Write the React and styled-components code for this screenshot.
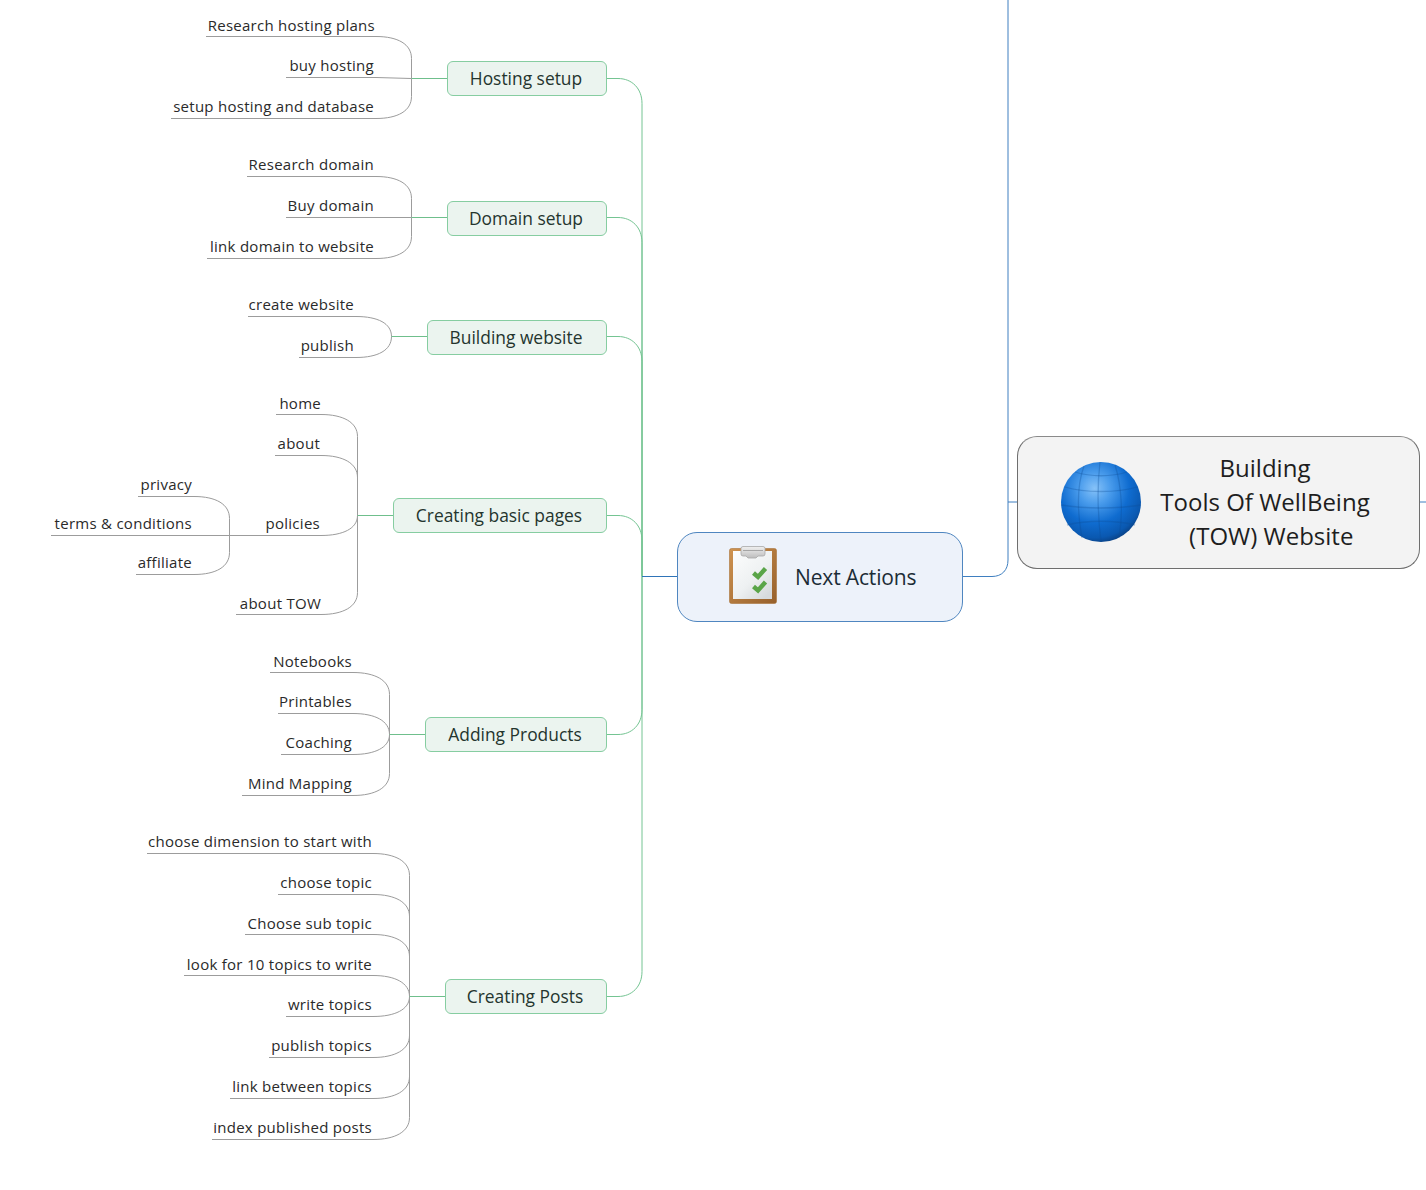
import React from "react";
import styled, { createGlobalStyle } from "styled-components";

const Global = createGlobalStyle`
  html, body { margin: 0; padding: 0; background: #fff; overflow: hidden; }
  body { font-family: "Open Sans", "Noto Sans", "Liberation Sans", sans-serif; }
`;

const Canvas = styled.div`
  position: relative;
  width: 1426px;
  height: 1190px;
  overflow: hidden;
  background: #fff;
`;
const Wires = styled.svg`
  position: absolute;
  inset: 0;
  width: 1426px;
  height: 1190px;
`;
const Leaf = styled.span`
  position: absolute;
  right: ${p => 1426 - p.$right}px;
  top: ${p => p.$line - 22.5 + p.$nudge}px;
  height: 20px;
  line-height: 20px;
  font-size: 15px;
  letter-spacing: 0.27px;
  color: #2a2a2a;
  white-space: nowrap;
`;
const Branch = styled.div`
  position: absolute;
  box-sizing: border-box;
  left: ${p => p.$left}px;
  top: ${p => p.$top}px;
  width: ${p => 607 - p.$left}px;
  height: 35px;
  padding: 0 2px 2px 0;
  display: flex;
  align-items: center;
  justify-content: center;
  background: #ebf4ef;
  border: 1px solid #86cda1;
  border-radius: 6px;
  font-size: 17.4px;
  color: #24352e;
`;
const ActionsNode = styled.div`
  position: absolute;
  box-sizing: border-box;
  left: 677px;
  top: 532px;
  width: 286px;
  height: 90px;
  display: flex;
  align-items: center;
  gap: 18px;
  padding-left: 51px;
  background: #edf2fa;
  border: 1px solid #4f86c0;
  border-radius: 20px;
  font-size: 21px;
  letter-spacing: -0.15px;
  color: #1c2c36;
`;
const RootNode = styled.div`
  position: absolute;
  box-sizing: border-box;
  left: 1017px;
  top: 436px;
  width: 403px;
  height: 133px;
  display: flex;
  align-items: center;
  gap: 17px;
  padding: 0 0 2px 42px;
  background: #f3f3f3;
  border: 1px solid #6e6e6e;
  border-top-color: #8a8a8a;
  border-radius: 20px;
  color: #1e1e1e;
`;
const RootTitle = styled.div`
  width: 212px;
  font-size: 24px;
  line-height: 34px;
  text-align: center;
  white-space: pre;
`;
const ClipboardIcon = styled.svg`
  flex: none;
  width: 48px;
  height: 60px;
  margin-top: -4px;
  filter: blur(0.35px);
`;
const GlobeIcon = styled.svg`
  flex: none;
  width: 82px;
  height: 82px;
  filter: blur(0.6px);
`;

const Clipboard = () => (
  <ClipboardIcon viewBox="0 0 48 60">
    <defs>
      <linearGradient id="wood" x1="0" y1="0" x2="1" y2="1">
        <stop offset="0" stopColor="#cf9350" />
        <stop offset="1" stopColor="#96602b" />
      </linearGradient>
      <linearGradient id="paper" x1="0" y1="0" x2="0.8" y2="1">
        <stop offset="0" stopColor="#fcfdfd" />
        <stop offset="0.6" stopColor="#eef1f2" />
        <stop offset="1" stopColor="#d6dadc" />
      </linearGradient>
      <linearGradient id="clip" x1="0" y1="0" x2="0" y2="1">
        <stop offset="0" stopColor="#f0f0f0" />
        <stop offset="1" stopColor="#bdbdbd" />
      </linearGradient>
    </defs>
    <rect x="0.5" y="3.5" width="47" height="55" rx="2" fill="url(#wood)" stroke="#a9743a" strokeWidth="0.6" />
    <rect x="4" y="6" width="39" height="48" fill="url(#paper)" />
    <path d="M14 1.5h20a2 2 0 0 1 2 2V9a2 2 0 0 1-2 2h-5l-2 2H19l-2-2h-3a2 2 0 0 1-2-2V3.5a2 2 0 0 1 2-2z" fill="url(#clip)" stroke="#a8a8a8" strokeWidth="0.8" />
    <path d="M14 5.5h20" stroke="#8d8d8d" strokeWidth="0.7" />
    <path d="M24.5 28l4.5 4 7.5-8.5" fill="none" stroke="#5aa548" strokeWidth="4.4" />
    <path d="M24.5 41.5l4.5 4 7.5-8.5" fill="none" stroke="#5aa548" strokeWidth="4.4" />
  </ClipboardIcon>
);

const Globe = () => (
  <GlobeIcon viewBox="0 0 82 82">
    <defs>
      <radialGradient id="sphere" cx="0.42" cy="0.33" r="0.7">
        <stop offset="0" stopColor="#86c2f8" />
        <stop offset="0.28" stopColor="#4a9cec" />
        <stop offset="0.62" stopColor="#0f6cd0" />
        <stop offset="0.88" stopColor="#0a58b0" />
        <stop offset="1" stopColor="#0a3f80" />
      </radialGradient>
    </defs>
    <circle cx="41" cy="41" r="40" fill="url(#sphere)" />
    <g fill="none" stroke="#0c4c96" strokeOpacity="0.3" strokeWidth="1.3">
      <path d="M15 11c16 5 36 5 52 0" />
      <path d="M5 26c20 6 52 6 72 0" />
      <path d="M1 44c24 4 56 4 80 0" />
      <path d="M7 64c20-5 48-5 68 0" />
      <path d="M40 1c-3 25-2 55 1 80" />
      <path d="M24 5c-8 22-6 50-2 72" />
      <path d="M55 4c7 22 8 50 4 73" />
    </g>
  </GlobeIcon>
);

const groups = [
  { name: "Hosting setup", left: 447, top: 61, stem: 78.5, bracket: 411.5, right: 376,
    leaves: [["Research hosting plans", 36.5, 206, 375, 1], ["buy hosting", 77.5, 286, 374], ["setup hosting and database", 118.5, 171, 374]] },
  { name: "Domain setup", left: 447, top: 201, stem: 217.5, bracket: 411.5, right: 376,
    leaves: [["Research domain", 176.5, 247, 374], ["Buy domain", 217.5, 286, 374], ["link domain to website", 258.5, 207, 374]] },
  { name: "Building website", left: 427, top: 320, stem: 336.5, bracket: 391.5, right: 356,
    leaves: [["create website", 316.5, 248, 354], ["publish", 357.5, 299, 354]] },
  { name: "Creating basic pages", left: 393, top: 498, stem: 515.5, bracket: 357.5, right: 321,
    leaves: [["home", 414.5, 276, 321, 1], ["about", 455.5, 275, 320], ["policies", 535.5, 51, 320], ["about TOW", 614.5, 236, 321, 1]] },
  { name: "Adding Products", left: 425, top: 717, stem: 734.5, bracket: 389.5, right: 353,
    leaves: [["Notebooks", 672.5, 270, 352, 1], ["Printables", 713.5, 278, 352], ["Coaching", 754.5, 281, 352], ["Mind Mapping", 795.5, 242, 352]] },
  { name: "Creating Posts", left: 445, top: 979, stem: 996.5, bracket: 409.5, right: 373,
    leaves: [["choose dimension to start with", 853.5, 147, 372], ["choose topic", 894.5, 278, 372], ["Choose sub topic", 934.5, 245, 372, 1], ["look for 10 topics to write", 975.5, 184, 372, 1], ["write topics", 1016.5, 286, 372], ["publish topics", 1057.5, 269, 372], ["link between topics", 1098.5, 230, 372], ["index published posts", 1139.5, 212, 372]] },
];

const subLeaves = [["privacy", 496.5, 138, 192], ["terms & conditions", 535.5, 51, 192], ["affiliate", 574.5, 136, 192]];

const leafPath = (y, stem, bracket, curveStart, left) => {
  const dist = Math.abs(stem - y);
  if (dist < 3) return `M${left} ${y}H${curveStart}L${bracket} ${stem}`;
  const dir = stem > y ? 1 : -1;
  const ry = Math.min(22, dist);
  return `M${left} ${y}H${curveStart}C${curveStart + 22} ${y} ${bracket} ${y + dir * ry * 0.35} ${bracket} ${y + dir * ry}V${stem}`;
};

const trunkPath = (stem) => {
  const dir = stem < 576 ? 1 : -1;
  return `M607 ${stem}H618C632 ${stem} 642 ${stem + dir * 10} 642 ${stem + dir * 25}V576`;
};

export default function App() {
  return (
    <Canvas>
      <Global />
      <Wires viewBox="0 0 1426 1190" fill="none">
        {groups.map(g => (
          <g key={g.name}>
            <path d={trunkPath(g.stem)} stroke="#74c492" />
            {g.leaves.map(([t, y, l]) => (
              <path key={t} d={leafPath(y, g.stem, g.bracket, g.right, l)} stroke="#9c9c9c" />
            ))}
            <path d={`M${g.bracket} ${g.stem}H${g.left}`} stroke="#6fbf8c" />
          </g>
        ))}
        {subLeaves.map(([t, y, l]) => (
          <path key={t} d={leafPath(y, 535.5, 229.5, 194, l)} stroke="#9c9c9c" />
        ))}
        <path d="M642 576.5H677" stroke="#2f74b8" />
        <path d="M962 576.5H992C1002 576.5 1008 570 1008 560V0" stroke="#3f7fc0" />
        <path d="M1008 502H1017M1420 502H1426" stroke="#3f7fc0" />
      </Wires>
      {groups.map(g => (
        <React.Fragment key={g.name}>
          {g.leaves.map(([t, y, , r, n = 0]) => <Leaf key={t} $line={y} $right={r} $nudge={n}>{t}</Leaf>)}
          <Branch $left={g.left} $top={g.top}>{g.name}</Branch>
        </React.Fragment>
      ))}
      {subLeaves.map(([t, y, , r]) => <Leaf key={t} $line={y} $right={r} $nudge={0}>{t}</Leaf>)}
      <ActionsNode><Clipboard />Next Actions</ActionsNode>
      <RootNode>
        <Globe />
        <RootTitle>{"Building\nTools Of WellBeing\n  (TOW) Website"}</RootTitle>
      </RootNode>
    </Canvas>
  );
}
